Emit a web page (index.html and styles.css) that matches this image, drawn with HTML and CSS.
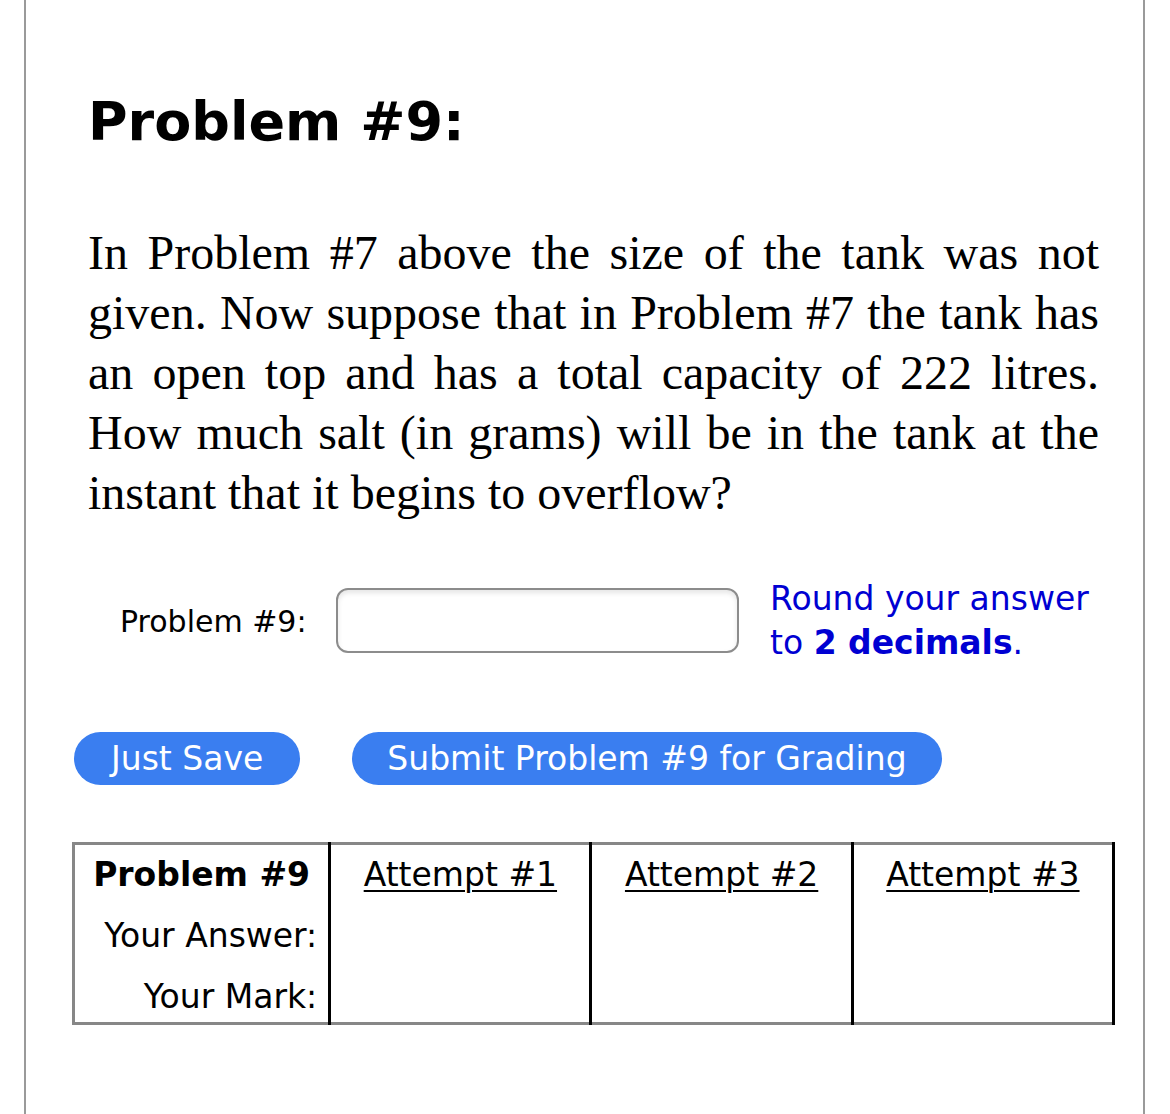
FILE: index.html
```html
<!DOCTYPE html>
<html lang="en">
<head>
<meta charset="utf-8">
<title>Problem #9</title>
<link rel="stylesheet" href="styles.css">
</head>
<body>
<div class="page">
  <div class="problem">
    <h2 class="title">Problem #9:</h2>
    <p class="statement">In Problem #7 above the size of the tank was not given. Now suppose that in Problem #7 the tank has an open top and has a total capacity of 222 litres. How much salt (in grams) will be in the tank at the instant that it begins to overflow?</p>
  </div>

  <div class="answer-row">
    <label class="answer-label" for="ans9">Problem #9:</label>
    <input class="answer-input" id="ans9" type="text">
    <div class="note">Round your answer<br>to <b>2 decimals</b>.</div>
  </div>

  <div class="buttons">
    <button class="btn btn-save" type="button">Just Save</button>
    <button class="btn" type="button">Submit Problem #9 for Grading</button>
  </div>

  <table class="attempts">
    <colgroup>
      <col class="c1"><col class="c2"><col class="c2"><col class="c2">
    </colgroup>
    <tr>
      <th class="head">Problem #9</th>
      <td class="att"><a href="#">Attempt #1</a></td>
      <td class="att"><a href="#">Attempt #2</a></td>
      <td class="att"><a href="#">Attempt #3</a></td>
    </tr>
    <tr class="row-answer">
      <th class="rowlabel">Your Answer:</th>
      <td class="att"></td>
      <td class="att"></td>
      <td class="att"></td>
    </tr>
    <tr class="row-mark">
      <th class="rowlabel">Your Mark:</th>
      <td class="att"></td>
      <td class="att"></td>
      <td class="att"></td>
    </tr>
  </table>
</div>
</body>
</html>
```

FILE: styles.css
```css
html, body {
  margin: 0;
  padding: 0;
  background: #ffffff;
}

body {
  font-family: "DejaVu Sans", Verdana, sans-serif;
  color: #000;
}

.page {
  box-sizing: border-box;
  margin-left: 24px;
  width: 1121px;
  min-height: 1114px;
  border-left: 2px solid #9a9a9a;
  border-right: 2px solid #9a9a9a;
  padding: 90px 26px 0 46px;
}

.problem {
  padding: 0 18px 0 16px;
}

.title {
  margin: 0;
  font-size: 54px;
  font-weight: bold;
  line-height: normal;
}

.statement {
  margin: 70px 0 0;
  font-family: "Liberation Serif", "Times New Roman", serif;
  font-size: 48px;
  line-height: 60px;
  text-align: justify;
}

.answer-row {
  display: flex;
  align-items: center;
  margin-top: 54px;
  padding-left: 48px;
}

.answer-label {
  font-size: 30px;
  width: 188px;
  margin-right: 28px;
}

.answer-input {
  box-sizing: border-box;
  width: 403px;
  height: 65px;
  border: 2px solid #8c8c8c;
  border-radius: 12px;
  background: #fff;
  box-shadow: inset 0 3px 5px rgba(0, 0, 0, 0.10);
  margin: -2px 31px 0 0;
  padding: 0 12px;
  font-size: 30px;
}

.note {
  color: #0000d2;
  font-size: 33px;
  line-height: 44px;
}

.note b {
  font-weight: bold;
}

.buttons {
  display: flex;
  gap: 52px;
  margin-top: 67px;
  padding-left: 2px;
}

.btn {
  font-family: "DejaVu Sans", Verdana, sans-serif;
  font-size: 33px;
  line-height: 39px;
  color: #fff;
  background: #3a7ef0;
  border: none;
  border-radius: 27px;
  padding: 7px 35px;
  cursor: pointer;
}

.btn-save {
  padding: 7px 37px;
}

.attempts {
  margin-top: 57px;
  width: 1043px;
  border-collapse: collapse;
  table-layout: fixed;
  border: 3px solid #878787;
  font-size: 33px;
}

.attempts col.c1 { width: 256px; }
.attempts col.c2 { width: 261px; }

.attempts th,
.attempts td {
  padding: 9px 11px;
  line-height: 41px;
  height: 41px;
  vertical-align: middle;
}

.attempts .row-answer th,
.attempts .row-answer td {
  padding: 11px 11px 7px;
}

.attempts .row-mark th,
.attempts .row-mark td {
  padding: 13px 11px 5px;
}

.attempts .head {
  text-align: center;
  font-weight: bold;
  border-right: 3px solid #000;
}

.attempts .rowlabel {
  text-align: right;
  font-weight: normal;
  border-right: 3px solid #000;
}

.attempts .att {
  text-align: center;
  border-left: 3px solid #000;
  border-right: 3px solid #000;
}

.attempts a {
  color: #000;
  text-decoration: underline;
  text-decoration-thickness: 2px;
  text-underline-offset: 4px;
}
```
